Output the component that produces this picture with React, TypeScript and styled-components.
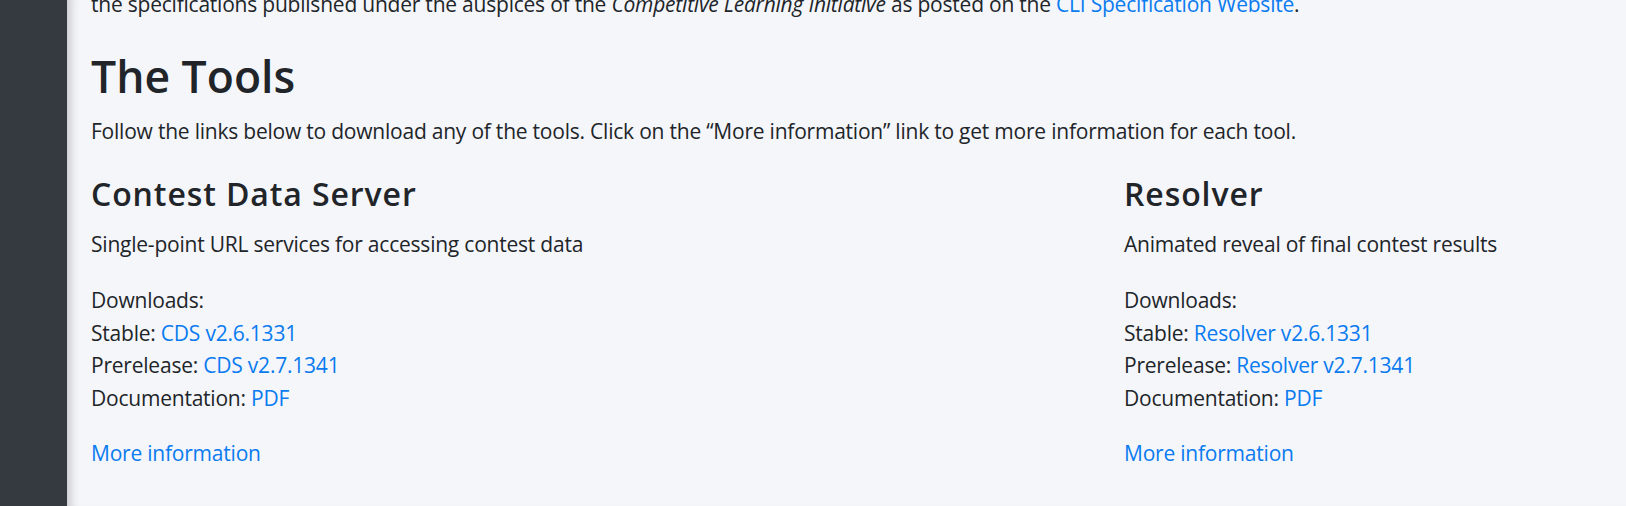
import styled, { createGlobalStyle } from 'styled-components';

const textColor = '#212529';
const linkColor = '#0a7bf0';

const GlobalStyle = createGlobalStyle`
	html, body {
		margin: 0;
		padding: 0;
		height: 100%;
	}
	body {
		background: #f5f6fa;
		font-family: 'Open Sans', 'Liberation Sans', sans-serif;
		font-size: 21px;
		letter-spacing: -0.22px;
		line-height: 32.5px;
		color: ${textColor};
		overflow: hidden;
	}
`;

interface ITool {
	name: string;
	summary: string;
	short: string;
	stable: string;
	prerelease: string;
}

const tools: ITool[] = [
	{
		name: 'Contest Data Server',
		summary: 'Single-point URL services for accessing contest data',
		short: 'CDS',
		stable: 'v2.6.1331',
		prerelease: 'v2.7.1341',
	},
	{
		name: 'Resolver',
		summary: 'Animated reveal of final contest results',
		short: 'Resolver',
		stable: 'v2.6.1331',
		prerelease: 'v2.7.1341',
	},
];

const ToolCard = ({ tool }: { tool: ITool }) => (
	<ToolColumn>
		<ToolTitle>{tool.name}</ToolTitle>
		<Summary>{tool.summary}</Summary>
		<DownloadList>
			Downloads:
			<br />
			Stable: <Link href='#'>{`${tool.short} ${tool.stable}`}</Link>
			<br />
			Prerelease:{' '}
			<Link href='#'>{`${tool.short} ${tool.prerelease}`}</Link>
			<br />
			Documentation: <Link href='#'>PDF</Link>
		</DownloadList>
		<MoreInfo>
			<Link href='#'>More information</Link>
		</MoreInfo>
	</ToolColumn>
);

const App = () => {
	return (
		<>
			<GlobalStyle />
			<Page>
				<Sidebar />
				<Main>
					<Intro>
						the specifications published under the auspices of the{' '}
						<em>Competitive Learning Initiative</em> as posted on the{' '}
						<Link href='#'>CLI Specification Website</Link>.
					</Intro>
					<Title>The Tools</Title>
					<Lead>
						Follow the links below to download any of the tools.
						Click on the “More information” link to get more
						information for each tool.
					</Lead>
					<ToolGrid>
						{tools.map(tool => (
							<ToolCard key={tool.name} tool={tool} />
						))}
					</ToolGrid>
				</Main>
			</Page>
		</>
	);
};

const Page = styled.div`
	display: flex;
	height: 506px;
	overflow: hidden;
`;

const Sidebar = styled.aside`
	width: 67px;
	flex-shrink: 0;
	background: #343a40;
`;

const Main = styled.main`
	flex: 1;
	padding: 0 24px;
	box-shadow: inset 12px 0 10px -8px rgba(0, 0, 0, 0.18);
	overflow: hidden;
`;

const Intro = styled.p`
	margin: -12px 0 0;
	white-space: nowrap;
`;

const Title = styled.h1`
	font-size: 44.5px;
	font-weight: 600;
	letter-spacing: 0;
	line-height: 1.2;
	margin: 28px 0 13px;
`;

const Lead = styled.p`
	margin: 0;
`;

const ToolGrid = styled.div`
	display: grid;
	grid-template-columns: 1033px 1fr;
	margin-top: 28px;
`;

const ToolColumn = styled.section`
	display: flex;
	flex-direction: column;
`;

const ToolTitle = styled.h3`
	font-size: 32px;
	font-weight: 600;
	letter-spacing: 0.9px;
	line-height: 1.2;
	margin: 0 0 14px;
`;

const Summary = styled.p`
	margin: 0 0 24px;
`;

const DownloadList = styled.p`
	margin: 0 0 23px;
`;

const MoreInfo = styled.p`
	margin: 0;
`;

const Link = styled.a`
	color: ${linkColor};
	text-decoration: none;
`;

export default App;
